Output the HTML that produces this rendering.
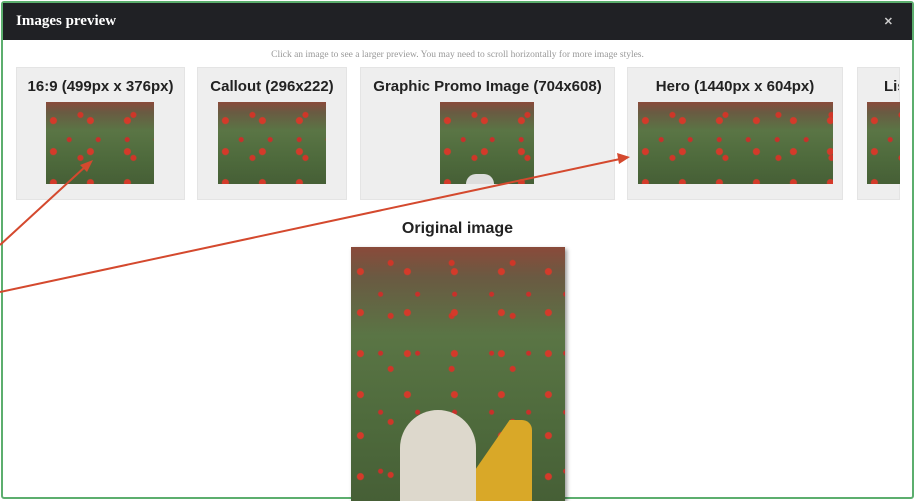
<!DOCTYPE html>
<html><head><style>
*{margin:0;padding:0;box-sizing:border-box}
body{width:915px;height:501px;overflow:hidden;background:#fff;position:relative;font-family:"Liberation Sans",sans-serif}
.frame{position:absolute;left:1px;top:1px;width:913px;height:498px;border:2px solid #5cae6e;border-radius:3px}
.hdr{position:absolute;left:3px;top:3px;width:909px;height:37px;background:#202125;color:#fff;font-family:"Liberation Serif",serif;font-weight:bold;font-size:15px;line-height:37px;padding-left:13px}
.x{position:absolute;right:19px;top:1px;color:#ccc;font-size:11px;line-height:37px}
.hint{position:absolute;top:50px;left:0;width:915px;text-align:center;font-family:"Liberation Serif",serif;font-size:9.5px;color:#999}
.card{position:absolute;top:67px;height:133px;background:#eee;border:1px solid #e4e4e4;text-align:center;font-weight:bold;font-size:15px;color:#222;padding-top:10px;white-space:nowrap;overflow:hidden}
.img{position:absolute;background-color:#4f6a3e;
background-image:
radial-gradient(circle at 20% 60%,#d43a2a 0 3px,transparent 4px),
radial-gradient(circle at 65% 30%,#cf3628 0 2.5px,transparent 3.5px),
radial-gradient(circle at 80% 80%,#c9302a 0 2px,transparent 3px),
linear-gradient(#8a4a3a 0%,#6a5a42 12%,#5a7545 35%,#4e6a3c 70%,#465f36 100%);
background-size:37px 31px,53px 43px,29px 47px,100% 100%}
.arrow{position:absolute;left:0;top:0}
</style></head><body>
<div class="frame"></div>
<div class="hdr">Images preview<span class="x">✕</span></div>
<div class="hint">Click an image to see a larger preview. You may need to scroll horizontally for more image styles.</div>
<div class="card" style="left:16px;width:169px">16:9 (499px x 376px)</div>
<div class="card" style="left:197px;width:150px">Callout (296x222)</div>
<div class="card" style="left:360px;width:255px">Graphic Promo Image (704x608)</div>
<div class="card" style="left:627px;width:216px">Hero (1440px x 604px)</div>
<div class="card" style="left:857px;width:43px;text-align:left;padding-left:26px">List</div>
<div class="img" style="left:46px;top:102px;width:108px;height:82px"></div>
<div class="img" style="left:218px;top:102px;width:108px;height:82px"></div>
<div class="img" style="left:440px;top:102px;width:94px;height:82px"></div>
<div style="position:absolute;left:466px;top:174px;width:28px;height:10px;border-radius:14px 14px 0 0;background:#ddd"></div>
<div class="img" style="left:638px;top:102px;width:195px;height:82px"></div>
<div class="img" style="left:867px;top:102px;width:33px;height:82px"></div>
<div style="position:absolute;top:220px;left:0;width:915px;text-align:center;font-weight:bold;font-size:16px;color:#222">Original image</div>
<div class="img" style="left:351px;top:247px;width:214px;height:254px;box-shadow:2px 2px 4px rgba(0,0,0,.4);background-size:47px 41px,61px 53px,37px 59px,100% 100%"></div>
<div style="position:absolute;left:400px;top:410px;width:76px;height:91px;border-radius:38px 38px 0 0;background:#ddd8cc"></div>
<div style="position:absolute;left:476px;top:420px;width:56px;height:81px;border-radius:20px 10px 0 0;background:#d9a828;clip-path:polygon(60% 0,100% 0,100% 100%,0 100%,0 60%)"></div>
<svg class="arrow" width="915" height="501">
<g stroke="#d4492e" stroke-width="2" fill="#d4492e">
<line x1="0" y1="245" x2="86" y2="166"/>
<polygon points="93,160 80,165 87,172" stroke="none"/>
<line x1="0" y1="292" x2="620" y2="159"/>
<polygon points="630,157 617,153 619,164" stroke="none"/>
</g></svg>
</body></html>
